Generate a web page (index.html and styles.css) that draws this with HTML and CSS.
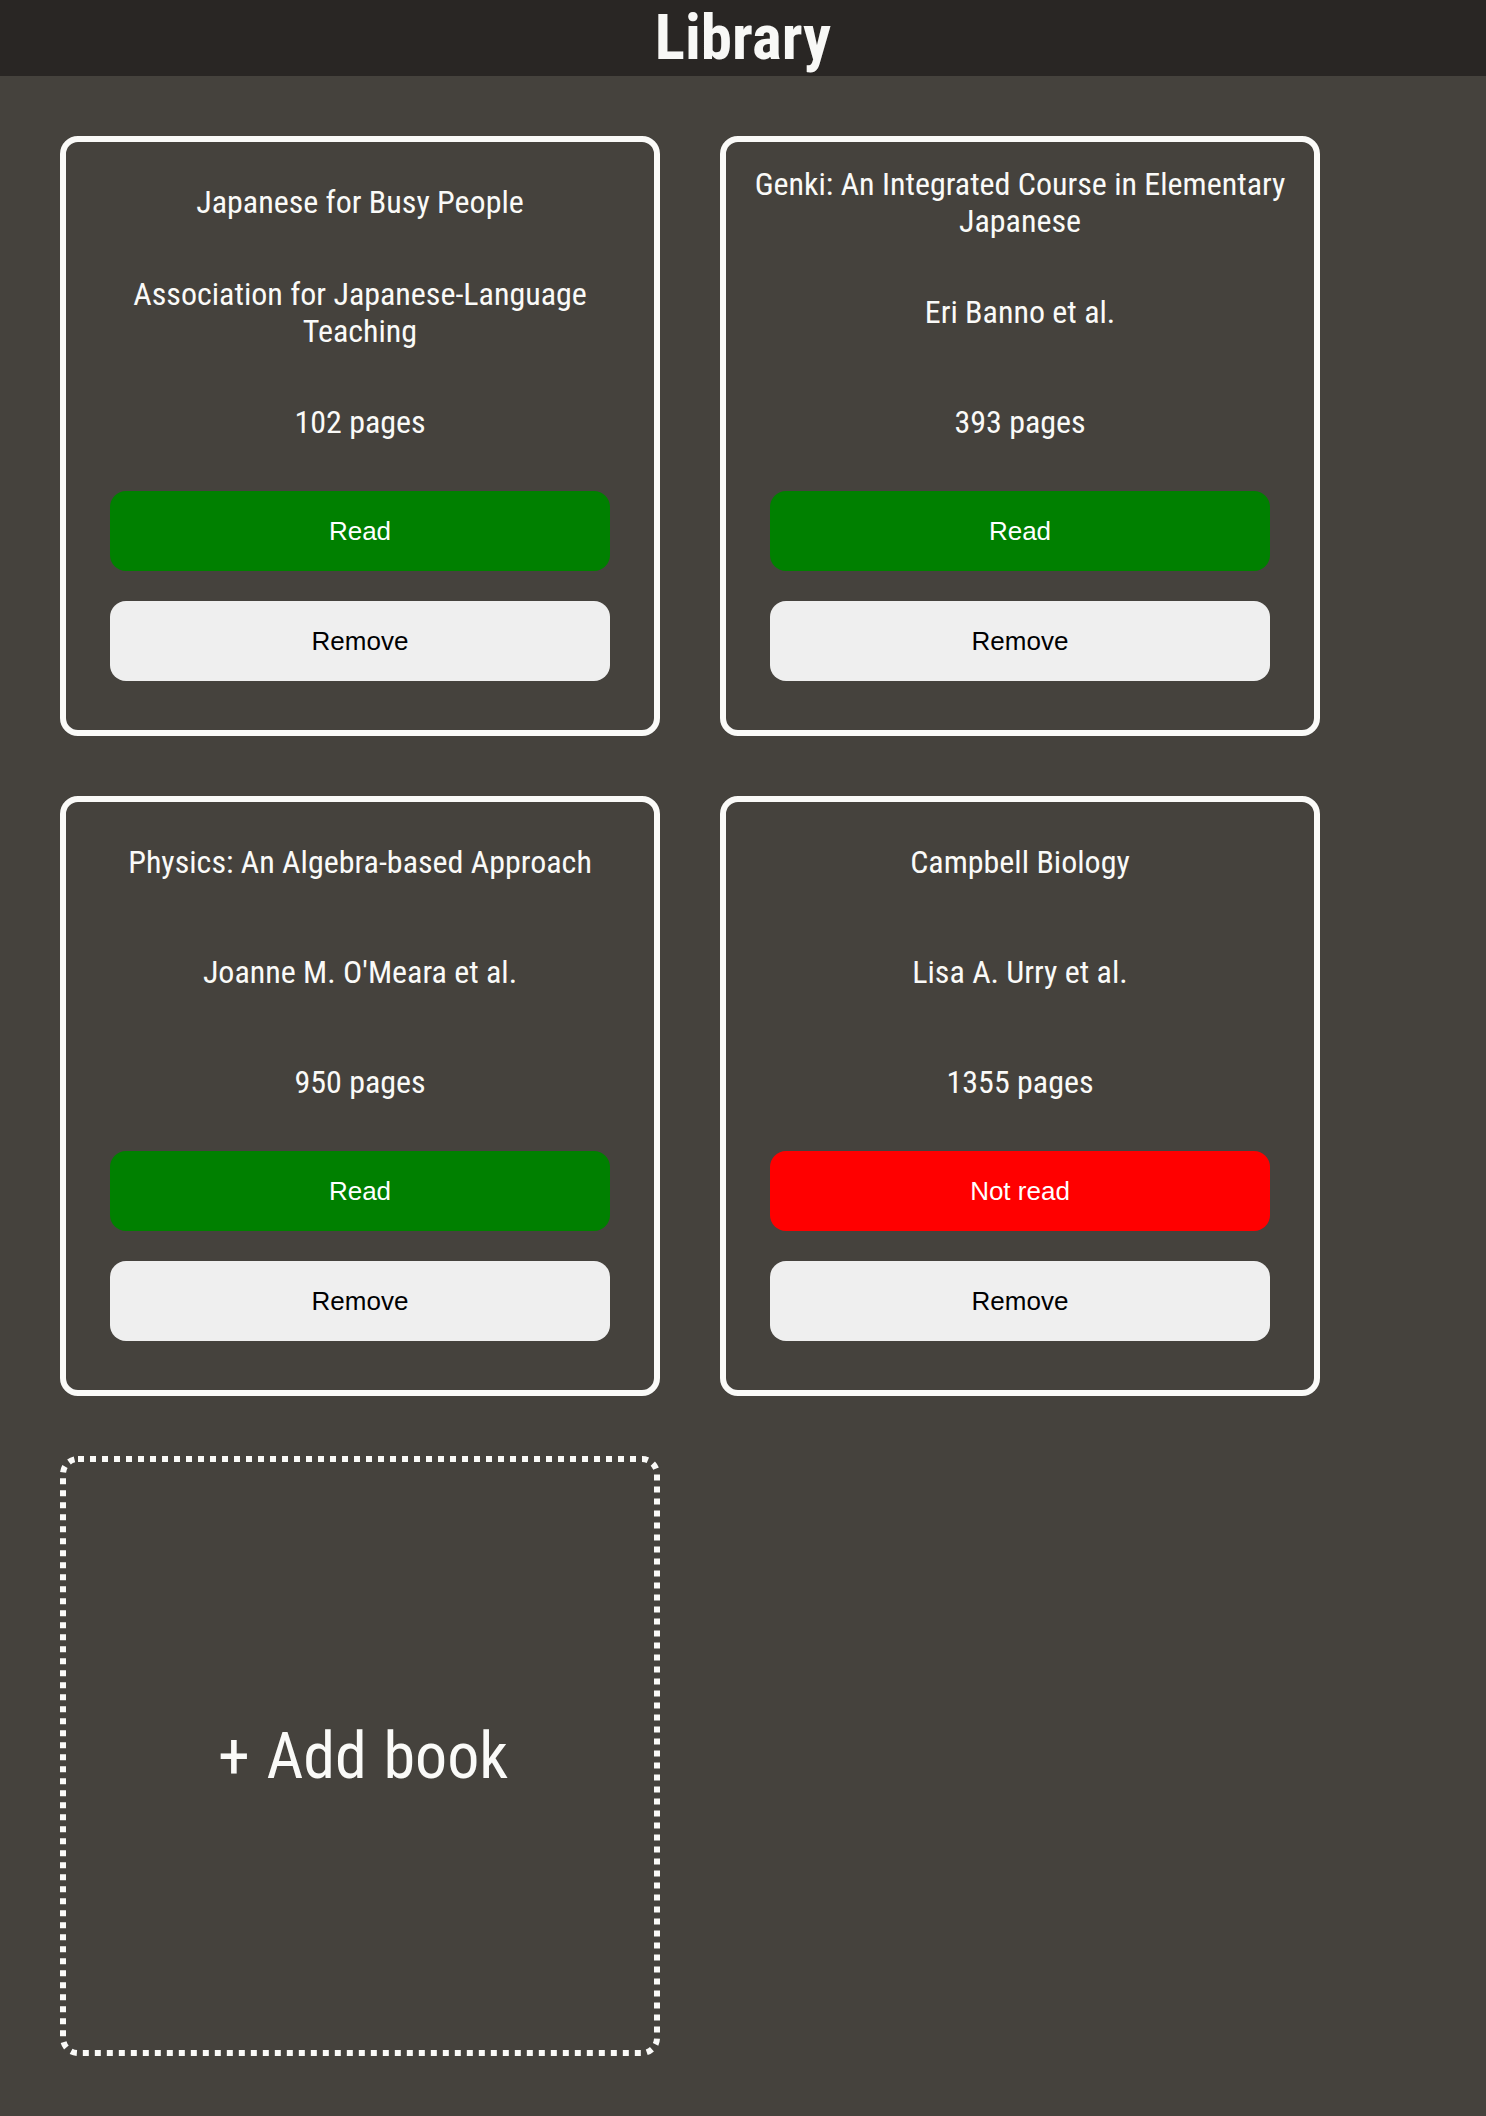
FILE: index.html
```html
<!DOCTYPE html>
<html lang="en">
<head>
<meta charset="utf-8">
<title>Library</title>
<link rel="stylesheet" href="styles.css">
</head>
<body>
<header class="top-bar">
  <h1 class="page-title">Library</h1>
</header>
<main class="shelf">
  <article class="book-card">
    <p class="book-title">Japanese for Busy People</p>
    <p class="book-author">Association for Japanese-Language Teaching</p>
    <p class="book-pages">102 pages</p>
    <button class="btn btn-status is-read" type="button">Read</button>
    <button class="btn btn-remove" type="button">Remove</button>
  </article>
  <article class="book-card">
    <p class="book-title">Genki: An Integrated Course in Elementary Japanese</p>
    <p class="book-author">Eri Banno et al.</p>
    <p class="book-pages">393 pages</p>
    <button class="btn btn-status is-read" type="button">Read</button>
    <button class="btn btn-remove" type="button">Remove</button>
  </article>
  <article class="book-card">
    <p class="book-title">Physics: An Algebra-based Approach</p>
    <p class="book-author">Joanne M. O'Meara et al.</p>
    <p class="book-pages">950 pages</p>
    <button class="btn btn-status is-read" type="button">Read</button>
    <button class="btn btn-remove" type="button">Remove</button>
  </article>
  <article class="book-card">
    <p class="book-title">Campbell Biology</p>
    <p class="book-author">Lisa A. Urry et al.</p>
    <p class="book-pages">1355 pages</p>
    <button class="btn btn-status is-unread" type="button">Not read</button>
    <button class="btn btn-remove" type="button">Remove</button>
  </article>
  <button class="add-card" type="button">
    <svg class="add-outline" viewBox="0 0 600 600" width="600" height="600" aria-hidden="true">
      <rect x="3" y="3" width="594" height="594" rx="15" ry="15" fill="none" stroke="#fafaf8" stroke-width="6" stroke-dasharray="6 6"/>
    </svg>
    <span class="add-label">+ Add book</span>
  </button>
</main>
</body>
</html>
```

FILE: styles.css
```css
html, body {
  margin: 0;
  padding: 0;
}

body {
  background: #45423d;
  color: #fafaf8;
  font-family: "Roboto Condensed", "Roboto", "Liberation Sans", sans-serif;
  font-stretch: condensed;
}

.top-bar {
  background: #292624;
  height: 76px;
  display: flex;
  justify-content: center;
  align-items: flex-start;
}

.page-title {
  margin: 0;
  font-size: 63px;
  line-height: 76px;
  font-weight: 700;
  color: #f8f8f6;
}

.shelf {
  display: grid;
  grid-template-columns: repeat(auto-fill, 600px);
  grid-auto-rows: 600px;
  gap: 60px;
  padding: 60px;
}

.book-card {
  box-sizing: border-box;
  border: 6px solid #fafaf8;
  border-radius: 18px;
  padding: 19px 20px 20px;
  display: grid;
  grid-template-rows: repeat(5, 80px);
  row-gap: 30px;
  align-items: center;
  justify-items: center;
  text-align: center;
}

.book-title,
.book-author,
.book-pages {
  position: relative;
  top: 2px;
  margin: 0;
  font-size: 32px;
  line-height: 1.172;
}

.btn {
  box-sizing: border-box;
  width: 500px;
  height: 80px;
  border: none;
  border-radius: 16px;
  font-family: "Liberation Sans", Arial, sans-serif;
  font-size: 26px;
  cursor: pointer;
}

.is-read {
  background: #008000;
  color: #ffffff;
}

.is-unread {
  background: #ff0000;
  color: #ffffff;
}

.btn-remove {
  background: #efefef;
  color: #000000;
}

.add-card {
  position: relative;
  box-sizing: border-box;
  background: transparent;
  border: none;
  padding: 0 0 0 6px;
  color: #fafaf8;
  font-family: "Roboto Condensed", "Roboto", "Liberation Sans", sans-serif;
  font-stretch: condensed;
  font-size: 64px;
  cursor: pointer;
}

.add-outline {
  position: absolute;
  left: 0;
  top: 0;
  width: 100%;
  height: 100%;
}

.add-label {
  word-spacing: 2px;
}
```
